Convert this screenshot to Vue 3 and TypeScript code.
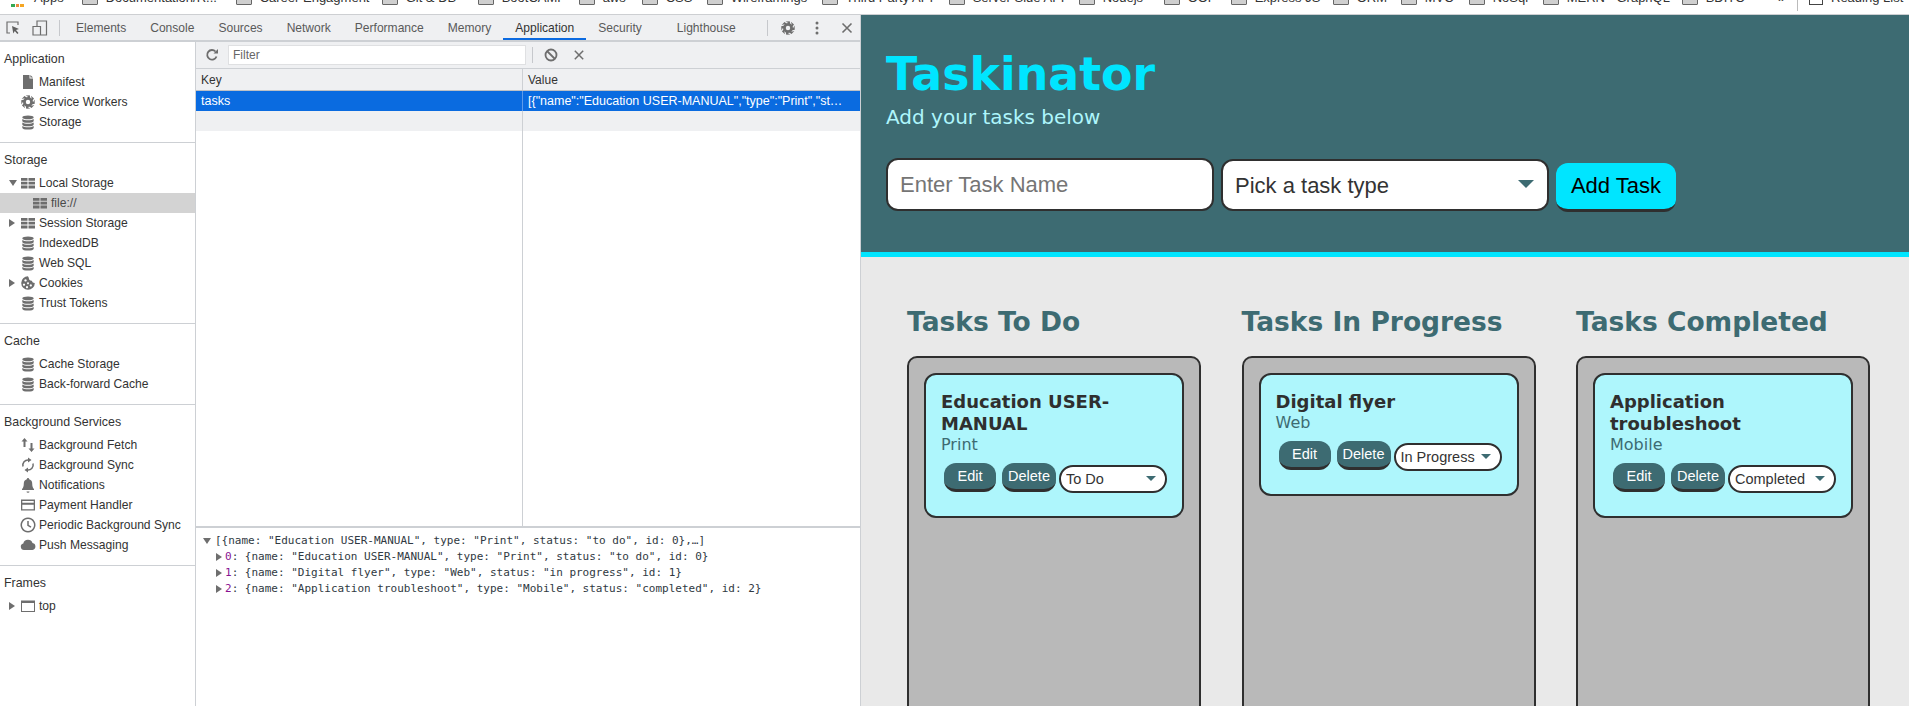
<script setup lang="ts">
interface Icon { fill?: string; stroke?: string }
interface Row { label: string; icon: string; arrow?: 'open' | 'closed'; deep?: boolean; selected?: boolean }
interface Section { title: string; rows: Row[] }
interface Task { name: string; type: string; status: string }
interface Column { title: string; tasks: Task[] }
interface Bookmark { label: string; pitch: number }

function gear(cx: number, cy: number, outer: number, inner: number, hole: number): string {
  const pts: string[] = []
  for (let i = 0; i < 8; i++) {
    const base = (i * Math.PI) / 4
    for (const [off, r] of [[-0.3, outer], [0.3, outer], [0.5, inner], [0.9, inner]] as const) {
      const a = base + off - 0.05
      pts.push(`${(cx + r * Math.cos(a)).toFixed(2)} ${(cy + r * Math.sin(a)).toFixed(2)}`)
    }
  }
  return `M${pts.join('L')}Z M${cx - hole} ${cy}a${hole} ${hole} 0 1 0 ${hole * 2} 0a${hole} ${hole} 0 1 0 ${-hole * 2} 0Z`
}

const icons: Record<string, Icon> = {
  file: { fill: 'M3 1h6.5v3.5H13V15H3z M10.4 1L13 3.6h-2.6z' },
  gear: { fill: gear(8, 8, 7, 5, 2.2) },
  db: { fill: 'M8 1.5c3.2 0 5.7.7 5.7 1.9S11.2 5.2 8 5.2 2.3 4.600 2.300 3.400 4.800 1.500 8 1.500z M2.300 5c1 .9 3.300 1.300 5.700 1.300S12.700 5.900 13.700 5v1.900c0 1.200-2.500 1.900-5.700 1.900S2.300 8.100 2.300 6.900z M2.300 8.500c1 .9 3.300 1.300 5.700 1.300s4.700-.4 5.700-1.300v1.900c0 1.200-2.500 1.900-5.700 1.900s-5.700-.7-5.700-1.900z M2.300 12c1 .9 3.300 1.300 5.700 1.300s4.700-.4 5.700-1.300v1.700c0 1.200-2.500 1.900-5.700 1.900s-5.700-.7-5.700-1.900z' },
  grid: { fill: 'M1 3h6.500v2.800H1z M8.500 3H15v2.800H8.500z M1 6.800h6.500v2.800H1z M8.500 6.800H15v2.800H8.500z M1 10.600h6.500v2.800H1z M8.500 10.600H15v2.800H8.500z' },
  cookie: { fill: 'M8 1.200a6.800 6.800 0 1 0 6.800 6.800 3 3 0 0 1-3-2.300 3 3 0 0 1-3-3A3 3 0 0 1 8 1.200z M5.500 4.200a1.200 1.200 0 1 0 .01 0z M4 8.500a1.100 1.100 0 1 0 .01 0z M8 7.300a1 1 0 1 0 .01 0z M10.800 9.300a1.100 1.100 0 1 0 .01 0z M7 11a1.100 1.100 0 1 0 .01 0z' },
  arrows: { fill: 'M4.500 1L7.500 4.500H5.500V10h-2V4.500H1.500z M11.500 15L8.500 11.500h2V6h2v5.500h2z' },
  sync: { stroke: 'M3 9.500A5.200 5.200 0 0 1 8.500 3 M13 6.500A5.200 5.200 0 0 1 7.500 13', fill: 'M8 0.500l3.500 2.500L8 5.500z M8 15.500L4.500 13 8 10.500z' },
  bell: { fill: 'M8 1a1.200 1.200 0 0 1 1.200 1.200c2 .6 3 2.300 3 4.300 0 3 .7 4.500 1.800 5.500v1H2v-1c1.100-1 1.800-2.500 1.800-5.500 0-2 1-3.700 3-4.300A1.200 1.200 0 0 1 8 1z M6.500 14.500h3a1.500 1.200 0 0 1-3 0z' },
  card: { fill: 'M1 2.500h14v11H1z M2.300 4v1.800h11.400V4z M2.300 7.800v4.400h11.400V7.800z' },
  clock: { stroke: 'M8 1.300a6.700 6.700 0 1 0 .01 0z M8 4v4.300l3 1.800' },
  cloud: { fill: 'M4 13a3.300 3.300 0 0 1-.7-6.500 4.800 4.800 0 0 1 9.200-.4A3.500 3.500 0 0 1 12.500 13z' },
  frame: { fill: 'M1 2.500h14v11.500H1z M2 5v8h12V5z' },
}

const sections: Section[] = [
  { title: 'Application', rows: [
    { label: 'Manifest', icon: 'file' },
    { label: 'Service Workers', icon: 'gear' },
    { label: 'Storage', icon: 'db' },
  ] },
  { title: 'Storage', rows: [
    { label: 'Local Storage', icon: 'grid', arrow: 'open' },
    { label: 'file://', icon: 'grid', deep: true, selected: true },
    { label: 'Session Storage', icon: 'grid', arrow: 'closed' },
    { label: 'IndexedDB', icon: 'db' },
    { label: 'Web SQL', icon: 'db' },
    { label: 'Cookies', icon: 'cookie', arrow: 'closed' },
    { label: 'Trust Tokens', icon: 'db' },
  ] },
  { title: 'Cache', rows: [
    { label: 'Cache Storage', icon: 'db' },
    { label: 'Back-forward Cache', icon: 'db' },
  ] },
  { title: 'Background Services', rows: [
    { label: 'Background Fetch', icon: 'arrows' },
    { label: 'Background Sync', icon: 'sync' },
    { label: 'Notifications', icon: 'bell' },
    { label: 'Payment Handler', icon: 'card' },
    { label: 'Periodic Background Sync', icon: 'clock' },
    { label: 'Push Messaging', icon: 'cloud' },
  ] },
  { title: 'Frames', rows: [{ label: 'top', icon: 'frame', arrow: 'closed' }] },
]

const bookmarks: Bookmark[] = [
  { label: 'Documentation/R...', pitch: 154 },
  { label: 'Career Engagment', pitch: 146 },
  { label: 'Git & DB', pitch: 96 },
  { label: 'BootCAMP', pitch: 101 },
  { label: 'aws', pitch: 63 },
  { label: 'CSS', pitch: 65 },
  { label: 'Wireframings', pitch: 115 },
  { label: 'Third Party API', pitch: 127 },
  { label: 'Server Side API', pitch: 130 },
  { label: 'Nodejs', pitch: 85 },
  { label: 'OOP', pitch: 67 },
  { label: 'Express JS', pitch: 102 },
  { label: 'ORM', pitch: 68 },
  { label: 'MVC', pitch: 68 },
  { label: 'NoSql', pitch: 74 },
  { label: 'MERN - GraphQL', pitch: 139 },
  { label: 'BDITC', pitch: 80 },
]
const tabs = ['Elements', 'Console', 'Sources', 'Network', 'Performance', 'Memory', 'Application', 'Security', 'Lighthouse']

const previewRows = [
  { index: '0', text: '{name: "Education USER-MANUAL", type: "Print", status: "to do", id: 0}' },
  { index: '1', text: '{name: "Digital flyer", type: "Web", status: "in progress", id: 1}' },
  { index: '2', text: '{name: "Application troubleshoot", type: "Mobile", status: "completed", id: 2}' },
]

const statuses = ['To Do', 'In Progress', 'Completed']
const columns: Column[] = [
  { title: 'Tasks To Do', tasks: [{ name: 'Education USER-MANUAL', type: 'Print', status: 'To Do' }] },
  { title: 'Tasks In Progress', tasks: [{ name: 'Digital flyer', type: 'Web', status: 'In Progress' }] },
  { title: 'Tasks Completed', tasks: [{ name: 'Application troubleshoot', type: 'Mobile', status: 'Completed' }] },
]
</script>

<template>
  <div class="page">
    <nav class="bookmarks">
      <div class="bm-row">
        <span class="apps"><i class="d1"></i><i class="d2"></i><i class="d3"></i></span>
        <span class="bm-text apps-label">Apps</span>
        <span v-for="b in bookmarks" :key="b.label" class="bm" :style="{ width: b.pitch + 'px' }"><span class="folder"></span><span class="bm-text">{{ b.label }}</span></span>
        <span class="bm-right">
          <span class="bm-more">»</span>
          <span class="bm-sep"></span>
          <span class="reading"></span>
          <span class="bm-text">Reading List</span>
        </span>
      </div>
    </nav>

    <div class="split">
      <section class="devtools">
        <header class="toolbar">
          <svg class="tb-icon first" width="14" height="14" viewBox="0 0 14 14"><path d="M4 12H1V1h11v3" fill="none" stroke="#6e6e6e" stroke-width="1.200"/><path d="M6 5l7 3-3 1 2.500 3-1.200 1-2.500-3-1.500 2.500z" fill="#5f5f5f"/></svg>
          <svg class="tb-icon" width="16" height="16" viewBox="0 0 16 16"><path d="M5 6V1h9.500v14H9 M1 6.500h7.500V15H1z" fill="none" stroke="#6e6e6e" stroke-width="1.200"/></svg>
          <span class="tb-sep"></span>
          <span v-for="t in tabs" :key="t" class="tab" :class="{ active: t === 'Application', last: t === 'Lighthouse' }">{{ t }}</span>
          <span class="tb-end">
            <span class="tb-sep"></span>
            <svg class="end-gear" width="16" height="16" viewBox="0 0 16 16"><path :d="icons.gear.fill" fill="#6e6e6e" fill-rule="evenodd"/></svg>
            <svg class="end-dots" width="4" height="14" viewBox="0 0 4 14"><circle cx="2" cy="2" r="1.500" fill="#6e6e6e"/><circle cx="2" cy="7" r="1.500" fill="#6e6e6e"/><circle cx="2" cy="12" r="1.500" fill="#6e6e6e"/></svg>
            <svg class="end-x" width="12" height="12" viewBox="0 0 12 12"><path d="M1.500 1.500l9 9M10.500 1.500l-9 9" stroke="#6e6e6e" stroke-width="1.600"/></svg>
          </span>
        </header>

        <div class="dt-body">
          <aside class="sidebar">
            <div v-for="s in sections" :key="s.title" class="side-section">
              <h3 class="side-title">{{ s.title }}</h3>
              <div v-for="r in s.rows" :key="r.label" class="side-row" :class="{ selected: r.selected, deep: r.deep }">
                <span class="tri-slot"><span v-if="r.arrow" class="tri" :class="r.arrow"></span></span>
                <svg class="ico" width="16" height="16" viewBox="0 0 16 16">
                  <path v-if="icons[r.icon].stroke" :d="icons[r.icon].stroke" fill="none" stroke="#6e6e6e" stroke-width="1.500"/>
                  <path v-if="icons[r.icon].fill" :d="icons[r.icon].fill" fill="#6e6e6e" fill-rule="evenodd"/>
                </svg>
                <span class="side-label">{{ r.label }}</span>
              </div>
            </div>
          </aside>

          <main class="storage">
            <div class="filterbar">
              <svg class="refresh" width="14" height="14" viewBox="0 0 14 14"><path d="M11.500 8.500A4.800 4.800 0 1 1 10.500 3.500" fill="none" stroke="#6e6e6e" stroke-width="1.800"/><path d="M8.500 5.500h4.500V1z" fill="#6e6e6e"/></svg>
              <input class="filter" type="text" placeholder="Filter" />
              <span class="fb-sep"></span>
              <svg class="block" width="14" height="14" viewBox="0 0 14 14"><circle cx="7" cy="7" r="5.500" fill="none" stroke="#6e6e6e" stroke-width="1.800"/><path d="M3 3l8 8" stroke="#6e6e6e" stroke-width="1.800"/></svg>
              <svg class="clear" width="10" height="10" viewBox="0 0 10 10"><path d="M.8.800l8.400 8.400M9.200.800L.8 9.200" stroke="#6e6e6e" stroke-width="1.500"/></svg>
            </div>
            <div class="table">
              <div class="t-row t-head"><span class="t-cell">Key</span><span class="t-cell">Value</span></div>
              <div class="t-row t-sel"><span class="t-cell">tasks</span><span class="t-cell">[{"name":"Education USER-MANUAL","type":"Print","st…</span></div>
              <div class="t-row t-stripe"><span class="t-cell"></span><span class="t-cell"></span></div>
              <div class="t-row t-fill"><span class="t-cell"></span><span class="t-cell"></span></div>
            </div>
            <div class="preview">
              <div class="p-line top"><span class="tri open"></span><span>[{name: "Education USER-MANUAL", type: "Print", status: "to do", id: 0},…]</span></div>
              <div v-for="p in previewRows" :key="p.index" class="p-line child">
                <span class="tri closed"></span><span><span class="p-index">{{ p.index }}</span>: {{ p.text }}</span>
              </div>
            </div>
          </main>
        </div>
      </section>

      <section class="app">
        <header class="hero">
          <h1 class="brand">Taskinator</h1>
          <p class="tagline">Add your tasks below</p>
          <form class="task-form" @submit.prevent>
            <input class="name-input" type="text" placeholder="Enter Task Name" />
            <span class="select-wrap big">
              <select class="type-select"><option>Pick a task type</option></select>
            </span>
            <button class="add-btn" type="button">Add Task</button>
          </form>
        </header>

        <div class="board">
          <div v-for="c in columns" :key="c.title" class="column">
            <h2 class="col-title">{{ c.title }}</h2>
            <ul class="list">
              <li v-for="t in c.tasks" :key="t.name" class="card">
                <h3 class="card-name">{{ t.name }}</h3>
                <span class="card-type">{{ t.type }}</span>
                <div class="actions">
                  <button class="act edit" type="button">Edit</button>
                  <button class="act del" type="button">Delete</button>
                  <span class="select-wrap small">
                    <select class="status-select" :value="t.status">
                      <option v-for="s in statuses" :key="s">{{ s }}</option>
                    </select>
                  </span>
                </div>
              </li>
            </ul>
          </div>
        </div>
      </section>
    </div>
  </div>
</template>

<style>
html, body { margin: 0; padding: 0; background: #fff; overflow: hidden; }
</style>

<style scoped>
* { box-sizing: border-box; }
.page {
  width: 1909px; height: 706px; overflow: hidden; display: flex; flex-direction: column;
  font-family: "Liberation Sans", Arial, sans-serif; color: #333;
}

/* bookmarks */
.bookmarks { height: 15px; flex: none; overflow: hidden; border-bottom: 1px solid #cdcfd2; background: #fff; }
.bm-row { display: flex; align-items: center; height: 14px; margin-top: -10px; padding-left: 11px; font-size: 13px; color: #333; }
.apps { display: flex; gap: 1px; width: 13px; flex: none; height: 3px; margin-top: 16px; }
.apps i { display: block; height: 3px; width: 4px; }
.d1 { background: #34a853; }
.d2 { background: #ea8a3c; }
.d3 { background: #f5a623; }
.apps-label { margin-left: 10px; margin-right: 18px; }
.bm { display: flex; align-items: center; gap: 8px; flex: none; }
.bm-text { white-space: nowrap; flex: none; }
.folder { width: 16px; height: 12px; background: #cfcfcf; border: 1px solid #666; border-radius: 1px; margin-top: 3px; flex: none; }
.bm-right { position: absolute; left: 1778px; top: -10px; height: 14px; display: flex; align-items: center; }
.bm-more { width: 19px; }
.bm-sep { width: 1px; height: 28px; background: #bbb; margin-right: 11px; }
.reading { width: 14px; height: 13px; border: 1px solid #444; margin-right: 8px; margin-top: 3px; }

.split { flex: 1; min-height: 0; display: flex; }

/* devtools */
.devtools { width: 861px; flex: none; display: flex; flex-direction: column; border-right: 1px solid #cdd0d4; font-size: 12px; }
.toolbar { height: 27px; flex: none; display: flex; align-items: center; background: #eff0f2; border-bottom: 2px solid #cdd0d4; color: #5a5a5a; }
.tb-icon.first { margin-left: 6px; margin-right: 12px; }
.tb-sep { width: 1px; height: 16px; background: #c6c8cc; margin-left: 11px; margin-right: 4px; flex: none; }
.tab { height: 25px; line-height: 27px; padding: 0 12px; font-size: 12.050px; white-space: nowrap; flex: none; }
.tab.active { color: #333; box-shadow: inset 0 -2px 0 #0b6ae0; }
.tab.last { margin-left: 11px; }
.tb-end { margin-left: auto; display: flex; align-items: center; }
.end-gear { margin-left: 8px; }
.end-dots { margin-left: 19px; }
.end-x { margin-left: 22px; margin-right: 7px; }

.dt-body { flex: 1; min-height: 0; display: flex; }
.sidebar { width: 196px; flex: none; border-right: 1px solid #cdd0d4; background: #fff; }
.side-section { padding-bottom: 10px; border-bottom: 1px solid #cdd0d4; }
.side-section:last-child { border-bottom: 0; }
.side-title { margin: 0; padding: 9px 0 5px 4px; font-size: 12.400px; font-weight: 400; line-height: 16px; color: #333; }
.side-row { height: 20px; display: flex; align-items: center; padding-left: 9px; font-size: 12.100px; color: #333; }
.side-row.selected { background: #d3d3d3; color: #4a4a4a; }
.side-row.deep { padding-left: 21px; }
.tri-slot { width: 11px; flex: none; display: flex; align-items: center; }
.tri { display: block; width: 0; height: 0; flex: none; }
.tri.open { border-left: 4px solid transparent; border-right: 4px solid transparent; border-top: 6px solid #6e6e6e; }
.tri.closed { border-top: 4px solid transparent; border-bottom: 4px solid transparent; border-left: 6px solid #6e6e6e; }
.ico { flex: none; margin-right: 3px; }
.side-label { white-space: nowrap; }

.storage { flex: 1; min-width: 0; display: flex; flex-direction: column; }
.filterbar { height: 27px; flex: none; display: flex; align-items: center; background: #eff0f2; border-bottom: 1px solid #cdd0d4; }
.refresh { margin-left: 9px; flex: none; }
.filter {
  margin-left: 9px; width: 298px; height: 20px; background: #fff; border: 1px solid #dfe0e2; padding: 0 4px;
  font: 12px "Liberation Sans", Arial, sans-serif; color: #333; outline: none;
}
.filter::placeholder { color: #666; opacity: 1; }
.fb-sep { width: 1px; height: 16px; background: #c6c8cc; margin-left: 6px; flex: none; }
.block { margin-left: 11px; flex: none; }
.clear { margin-left: 16px; flex: none; }

.table { flex: 1; min-height: 0; display: flex; flex-direction: column; }
.t-row { display: grid; grid-template-columns: 327px 1fr; flex: none; height: 20px; }
.t-cell { padding: 0 5px; line-height: 20px; font-size: 12.500px; white-space: nowrap; overflow: hidden; border-right: 1px solid #cdd0d4; min-width: 0; }
.t-cell:last-child { border-right: 0; }
.t-head { height: 22px; background: #eff0f2; border-bottom: 1px solid #bfc1c5; }
.t-head .t-cell { font-size: 12px; line-height: 22px; }
.t-sel { background: #0a6be0; color: #fff; }
.t-sel .t-cell { border-right-color: #5d9bea; }
.t-sel .t-cell:last-child { border-right: 0; }
.t-stripe { background: #eff0f2; }
.t-fill { flex: 1; background: #fff; }

.preview { height: 180px; flex: none; border-top: 2px solid #cdd0d4; padding-top: 5px; font: 11px/16px "DejaVu Sans Mono", monospace; color: #303942; background: #fff; }
.p-line { display: flex; align-items: center; height: 16px; white-space: pre; }
.p-line.top { padding-left: 7px; }
.p-line.top .tri { margin-right: 4px; }
.p-line.child { padding-left: 20px; }
.p-line.child .tri { margin-right: 3px; }
.p-index { color: #881391; }

/* app */
.app { flex: 1; min-width: 0; display: flex; flex-direction: column; background: #e9e9e9; }
.hero { height: 242px; flex: none; background: #3d6b72; border-bottom: 5px solid #00e5ff; padding: 29px 25px 0; }
.brand { margin: 0; font: 700 45.800px/60px "DejaVu Sans", Verdana, sans-serif; color: #00e5ff; }
.tagline { margin: 1px 0 0; font: 400 20px/24px "DejaVu Sans", Verdana, sans-serif; color: #aef6fc; }
.task-form { display: flex; align-items: flex-end; margin-top: 29px; gap: 7px; }
.name-input {
  width: 328px; height: 53px; border: 2px solid #2f2f2f; border-radius: 12px; padding: 0 12px; background: #fff;
  font: 22px "Liberation Sans", Arial, sans-serif; outline: none;
}
.name-input::placeholder { color: #757575; opacity: 1; }
.select-wrap { position: relative; display: block; flex: none; }
.select-wrap::after { content: ""; position: absolute; width: 0; height: 0; pointer-events: none; }
.select-wrap.big { width: 328px; height: 52px; }
.select-wrap.big::after { right: 15px; top: 21px; border-left: 8px solid transparent; border-right: 8px solid transparent; border-top: 8px solid #3d6b72; }
.type-select {
  appearance: none; width: 100%; height: 100%; border: 2px solid #2f2f2f; border-radius: 12px; background: #fff; color: #333;
  padding: 0 12px; font: 22px "Liberation Sans", Arial, sans-serif; outline: none; margin: 0;
}
.add-btn {
  width: 120px; height: 49px; border: 0; border-bottom: 3px solid #2f2f2f; border-radius: 12px; background: #00e5ff; color: #000;
  font: 22px "Liberation Sans", Arial, sans-serif; padding: 0; margin-bottom: -1px;
}

.board { flex: 1; min-height: 0; display: grid; grid-template-columns: repeat(3, 294px); column-gap: 40.500px; padding: 47px 0 0 46px; align-items: stretch; overflow: hidden; }
.column { display: flex; flex-direction: column; min-height: 0; }
.col-title { margin: 0 0 17px; font: 700 26.500px/35px "DejaVu Sans", Verdana, sans-serif; color: #3d6b72; white-space: nowrap; height: 35px; }
.list { flex: 1; margin: 0 0 -20px; padding: 15px; list-style: none; background: #b9b9b9; border: 2px solid #2f2f2f; border-radius: 10px; }
.card { background: #aef6fc; border: 2px solid #2f2f2f; border-radius: 12px; padding: 16px 15px 23px; }
.card-name { margin: 0; font: 700 18px/22px "DejaVu Sans", Verdana, sans-serif; color: #2f2f2f; }
.card-type { display: block; margin-top: -1px; font: 400 16px/22px "DejaVu Sans", Verdana, sans-serif; color: #3d6b72; }
.actions { display: flex; align-items: flex-start; margin-top: 7px; padding-left: 3px; }
.act {
  height: 29px; border: 0; border-bottom: 3px solid #2f2f2f; border-radius: 12px; background: #3d6b72; color: #fff;
  font: 14.500px "Liberation Sans", Arial, sans-serif; padding: 0; flex: none;
}
.act.edit { width: 52px; margin-right: 6px; }
.act.del { width: 54px; margin-right: 3px; }
.select-wrap.small { width: 108px; height: 28px; margin-top: 2px; }
.select-wrap.small::after { right: 11px; top: 11px; border-left: 5px solid transparent; border-right: 5px solid transparent; border-top: 5px solid #3d6b72; }
.status-select {
  appearance: none; width: 100%; height: 100%; border: 2px solid #2f2f2f; border-radius: 14px; background: #fff; color: #333;
  padding: 0 5px; font: 14.500px "Liberation Sans", Arial, sans-serif; outline: none; margin: 0;
}
</style>
